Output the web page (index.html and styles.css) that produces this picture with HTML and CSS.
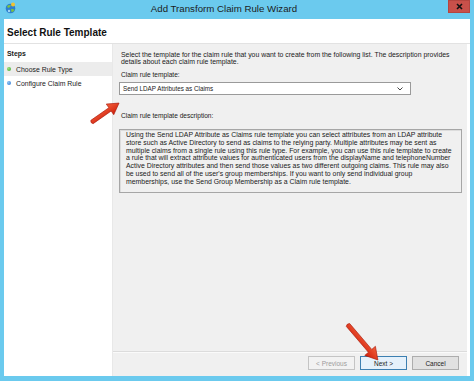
FILE: index.html
```html
<!DOCTYPE html>
<html lang="en">

<head>
    <meta charset="UTF-8">
    <meta name="viewport" content="width=device-width, initial-scale=1.0">
    <title>Add Transform Claim Rule Wizard</title>
    <link rel="stylesheet" href="styles.css">
</head>

<body>
    <div class="window">
        <div class="titlebar">
            <svg class="app-icon" width="11" height="12" viewBox="0 0 11 12">
                <circle cx="5.5" cy="6.5" r="4.8" fill="#2d7fd0" />
                <path d="M2 4 Q4 2.5 6 3.5 Q5 5.5 3 6 Z" fill="#7cc242" />
                <path d="M6 7 Q8.5 6.5 9.5 8 Q8 10.5 6.5 10 Z" fill="#7cc242" />
                <circle cx="8" cy="2.5" r="2" fill="#f2c230" />
                <circle cx="4" cy="9" r="1.2" fill="#9fd4f5" />
            </svg>
            <div class="window-title">Add Transform Claim Rule Wizard</div>
            <div class="close-btn">
                <svg width="7" height="7" viewBox="0 0 7 7">
                    <path d="M1 1 L6 6 M6 1 L1 6" stroke="#111" stroke-width="1.6" />
                </svg>
            </div>
        </div>

        <div class="frame">
            <div class="page-header">Select Rule Template</div>
            <div class="page-body">
                <div class="steps">
                    <div class="steps-title">Steps</div>
                    <div class="step active"><span class="dot dot-green"></span>Choose Rule Type</div>
                    <div class="step"><span class="dot dot-blue"></span>Configure Claim Rule</div>
                </div>

                <div class="content">
                    <div class="main">
                        <p class="intro">Select the template for the claim rule that you want to create from the following list. The description provides<br>details about each claim rule template.</p>
                        <div class="label">Claim rule template:</div>
                        <div class="select">
                            <span>Send LDAP Attributes as Claims</span>
                            <svg width="6" height="4" viewBox="0 0 6 4">
                                <path d="M0.5 0.5 L3 3 L5.5 0.5" fill="none" stroke="#444" stroke-width="1" />
                            </svg>
                        </div>
                        <div class="label label-desc">Claim rule template description:</div>
                        <div class="description">
                            Using the Send LDAP Attribute as Claims rule template you can select attributes from an LDAP attribute<br>
                            store such as Active Directory to send as claims to the relying party. Multiple attributes may be sent as<br>
                            multiple claims from a single rule using this rule type. For example, you can use this rule template to create<br>
                            a rule that will extract attribute values for authenticated users from the displayName and telephoneNumber<br>
                            Active Directory attributes and then send those values as two different outgoing claims. This rule may also<br>
                            be used to send all of the user's group memberships. If you want to only send individual group<br>
                            memberships, use the Send Group Membership as a Claim rule template.
                        </div>
                    </div>
                    <div class="buttons">
                        <div class="btn disabled">&lt; Previous</div>
                        <div class="btn default">Next &gt;</div>
                        <div class="btn">Cancel</div>
                    </div>
                </div>
            </div>
        </div>

        <!-- red callout arrows drawn over the dialog -->
        <svg class="callouts" width="474" height="381" viewBox="0 0 474 381">
            <defs>
                <linearGradient id="red" x1="0" y1="0" x2="0" y2="1">
                    <stop offset="0" stop-color="#f4603c" />
                    <stop offset="1" stop-color="#d0200c" />
                </linearGradient>
            </defs>
            <g transform="translate(92 122) rotate(-35)">
                <path d="M0 -2 L22 -2 L22 -6.5 L33 0 L22 6.5 L22 2 L0 2 Q-2 0 0 -2 Z" fill="url(#red)" stroke="#a8180a" stroke-width="0.6" />
            </g>
            <g transform="translate(348 325) rotate(49.5)">
                <path d="M0 -2.2 L34 -2.2 L34 -7 L46 0 L34 7 L34 2.2 L0 2.2 Q-2 0 0 -2.2 Z" fill="url(#red)" stroke="#a8180a" stroke-width="0.6" />
            </g>
        </svg>
    </div>
</body>

</html>
```

FILE: styles.css
```css
body {
    margin: 0;
    padding: 0;
    font-family: "Liberation Sans", Arial, sans-serif;
    color: #1a1a1a;
}

.window {
    width: 474px;
    height: 381px;
    position: relative;
    background: #6bcaee;
    display: flex;
    flex-direction: column;
    overflow: hidden;
}

.titlebar {
    height: 19px;
    display: flex;
    align-items: center;
    position: relative;
}

.app-icon {
    margin-left: 5px;
    margin-top: -4px;
}

.window-title {
    flex: 1;
    text-align: center;
    font-size: 9.7px;
    color: #1c1c1c;
    margin-top: -3px;
    margin-right: 16px;
}

.close-btn {
    width: 22px;
    height: 13px;
    margin-right: 4px;
    align-self: flex-start;
    background: #c8504a;
    display: flex;
    justify-content: center;
    align-items: center;
    box-shadow: inset 0 0 0 1px #b5453f;
}

.frame {
    flex: 1;
    margin: 0 4px 5px 4px;
    background: white;
    display: flex;
    flex-direction: column;
}

.page-header {
    height: 25px;
    box-sizing: border-box;
    padding: 8px 0 0 3px;
    font-size: 10px;
    line-height: 11px;
    font-weight: bold;
    color: #111;
    border-bottom: 1px solid #e2e2e2;
}

.page-body {
    flex: 1;
    display: flex;
}

.steps {
    width: 108px;
    border-right: 1px solid #e8e8e8;
    font-size: 6.9px;
}

.steps-title {
    font-weight: bold;
    line-height: 7px;
    padding: 6px 0 0 3px;
    margin-bottom: 5px;
}

.step {
    height: 14px;
    display: flex;
    align-items: center;
    padding-left: 3px;
}

.step.active {
    background: #ececec;
}

.dot {
    width: 4px;
    height: 4px;
    border-radius: 50%;
    margin-right: 5px;
}

.dot-green {
    background: radial-gradient(circle at 35% 35%, #9ee07a, #3aa52e);
}

.dot-blue {
    background: radial-gradient(circle at 35% 35%, #8cc4f4, #2a72cf);
}

.content {
    flex: 1;
    margin-right: 3px;
    background: #f0f0f0;
    display: flex;
    flex-direction: column;
}

.main {
    flex: 1;
    padding: 7px 5px 0 6px;
    font-size: 6.6px;
}

.intro {
    margin: 0 0 6px 2px;
    font-size: 6.9px;
    line-height: 7px;
}

.label {
    line-height: 7px;
    margin-left: 2px;
}

.select {
    margin-top: 4px;
    width: 292px;
    height: 13px;
    box-sizing: border-box;
    background: white;
    border: 1px solid #9a9a9a;
    display: flex;
    align-items: center;
    justify-content: space-between;
    padding: 0 7px 0 3px;
    font-size: 6.3px;
}

.label-desc {
    margin-top: 17px;
}

.description {
    margin-top: 10px;
    padding: 1px 4px 6px 6px;
    border: 1px solid #a6a6a6;
    box-shadow: inset 1px 1px 0 #dcdcdc;
    font-size: 6.9px;
    line-height: 7.8px;
    white-space: nowrap;
}

.buttons {
    border-top: 1px solid #dcdcdc;
    box-shadow: inset 0 1px 0 #fafafa;
    display: flex;
    justify-content: flex-end;
    gap: 5px;
    padding: 4px 8px 6px 0;
}

.btn {
    width: 47px;
    height: 14px;
    box-sizing: border-box;
    border: 1px solid #adadad;
    background: #e1e1e1;
    font-size: 6.5px;
    display: flex;
    justify-content: center;
    align-items: center;
}

.btn.default {
    border-color: #3c7fb1;
    background: #e5f1fb;
}

.btn.disabled {
    color: #9c9c9c;
    border-color: #c4c4c4;
    background: #f2f2f2;
}

.callouts {
    position: absolute;
    top: 0;
    left: 0;
    pointer-events: none;
}
```
